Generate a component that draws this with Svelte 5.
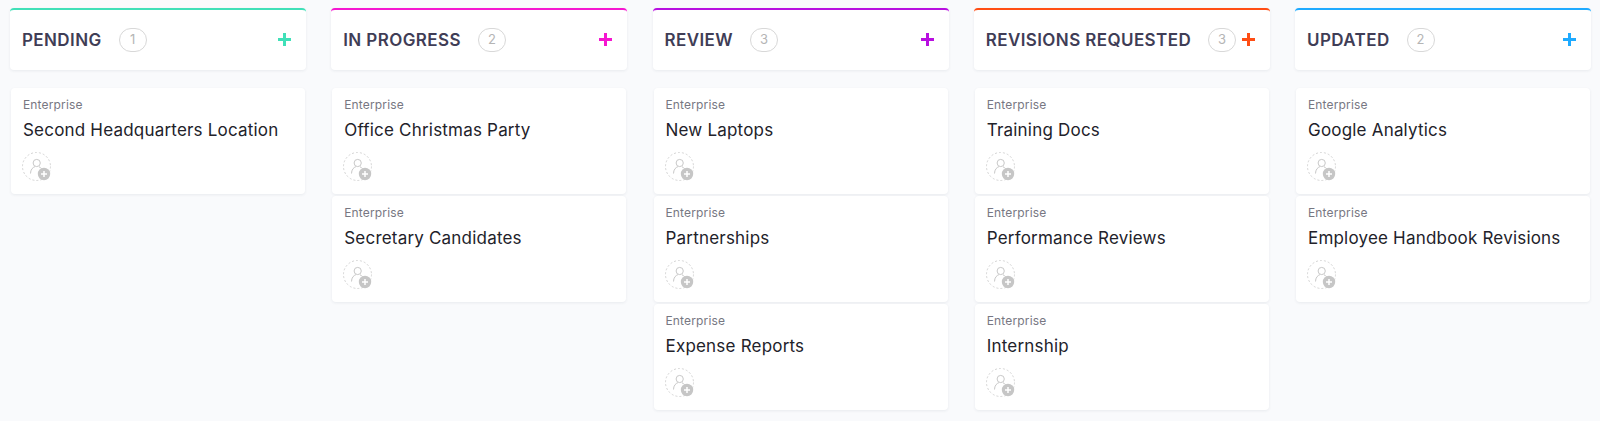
<script>
  const columns = [
    { name: 'PENDING', color: '#40e0b8', tasks: ['Second Headquarters Location'] },
    { name: 'IN PROGRESS', color: '#f516d0', tasks: ['Office Christmas Party', 'Secretary Candidates'] },
    { name: 'REVIEW', color: '#b80fe0', tasks: ['New Laptops', 'Partnerships', 'Expense Reports'] },
    { name: 'REVISIONS REQUESTED', color: '#ff4d14', tasks: ['Training Docs', 'Performance Reviews', 'Internship'] },
    { name: 'UPDATED', color: '#1eaaff', tasks: ['Google Analytics', 'Employee Handbook Revisions'] }
  ];
</script>

<div class="board">
  {#each columns as col}
    <section class="column">
      <header class="head" style="border-top-color: {col.color}">
        <h2>{col.name}</h2>
        <span class="count">{col.tasks.length}</span>
        <svg class="add" width="13" height="13" viewBox="0 0 13 13">
          <path d="M6.5 0v13M0 6.5h13" stroke={col.color} stroke-width="3" fill="none" />
        </svg>
      </header>
      <div class="cards">
        {#each col.tasks as task}
          <article class="card">
            <div class="project">Enterprise</div>
            <div class="title">{task}</div>
            <svg class="assign" width="30" height="30" viewBox="0 0 30 30">
              <circle cx="14.5" cy="14.5" r="14" fill="none" stroke="#d4d4d4" stroke-width="1" stroke-dasharray="2 2" />
              <circle cx="14.7" cy="11" r="3.6" fill="none" stroke="#c8c8c8" stroke-width="1" />
              <path d="M8.5 21.5c0-4 2.4-6.2 4.4-6.8M17 14.8c1 .4 2 1 2.6 2" fill="none" stroke="#c8c8c8" stroke-width="1" />
              <circle cx="22" cy="22" r="6.2" fill="#c6c6c6" />
              <path d="M22 19v6M19 22h6" stroke="#fff" stroke-width="1.5" />
            </svg>
          </article>
        {/each}
      </div>
    </section>
  {/each}
</div>

<style>
  :global(body) {
    background: #f9fafc;
  }

  .board {
    display: flex;
    gap: 25.25px;
    height: 421px;
    overflow: hidden;
    box-sizing: border-box;
    padding: 8px 0 0 10px;
    font-family: Inter, "Liberation Sans", sans-serif;
  }

  .column {
    width: 296px;
    flex: none;
  }

  .head {
    display: flex;
    align-items: center;
    box-sizing: border-box;
    height: 62px;
    padding: 0 15px 1px 12px;
    background: #fff;
    border-top: 2.5px solid;
    border-radius: 4px;
    box-shadow: 0 1px 3px rgba(40, 50, 80, 0.08);
  }

  h2 {
    margin: 0 17px 0 0;
    font-size: 17px;
    font-weight: 600;
    letter-spacing: 0.4px;
    color: #3f3d56;
    white-space: nowrap;
  }

  .count {
    box-sizing: border-box;
    width: 28px;
    height: 24px;
    border: 1.5px solid #d8d8d8;
    border-radius: 12px;
    text-align: center;
    font-size: 13px;
    line-height: 21px;
    color: #b5b5b5;
    flex: none;
  }

  .add {
    margin-left: auto;
    flex: none;
  }

  .cards {
    display: flex;
    flex-direction: column;
    gap: 2.2px;
    margin: 18px 1px 0;
  }

  .card {
    box-sizing: border-box;
    height: 106px;
    padding: 9px 12px 0;
    background: #fff;
    border-radius: 4px;
    box-shadow: 0 1px 3px rgba(40, 50, 80, 0.08);
  }

  .project {
    font-size: 12px;
    line-height: 15px;
    letter-spacing: 0.15px;
    color: #777782;
  }

  .title {
    margin-top: 8px;
    font-size: 17px;
    line-height: 20px;
    letter-spacing: 0.2px;
    color: #22222a;
    white-space: nowrap;
  }

  .assign {
    display: block;
    margin-top: 12px;
    margin-left: -1px;
  }
</style>
